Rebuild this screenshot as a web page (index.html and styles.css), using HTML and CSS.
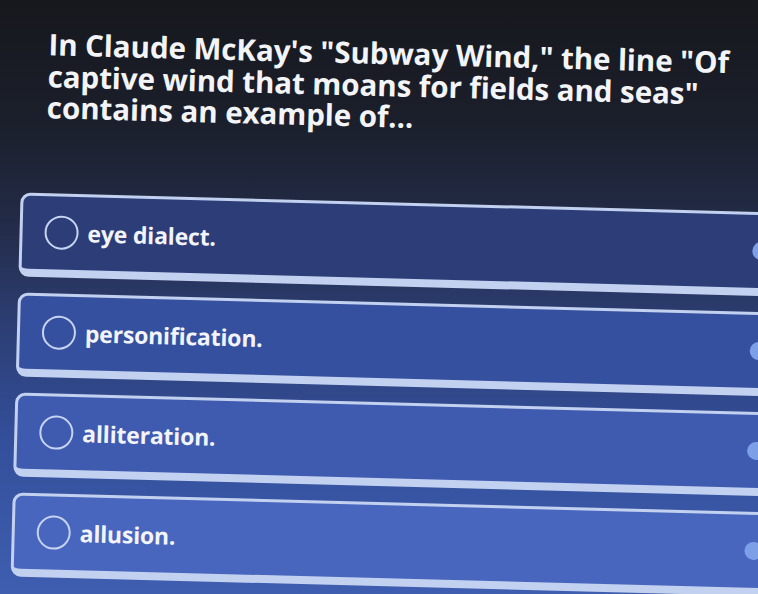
FILE: index.html
```html
<!DOCTYPE html>
<html lang="en">
<head>
<meta charset="utf-8">
<title>Question</title>
<link rel="stylesheet" href="styles.css">
</head>
<body>
<div class="screen">
  <h1 class="question">In Claude McKay's "Subway Wind," the line "Of<br>captive wind that moans for fields and seas"<br>contains an example of...</h1>
  <div class="options">
    <label class="option o1"><span class="radio"></span><span class="label">eye dialect.</span><span class="edge"></span></label>
    <label class="option o2"><span class="radio"></span><span class="label">personification.</span><span class="edge"></span></label>
    <label class="option o3"><span class="radio"></span><span class="label">alliteration.</span><span class="edge"></span></label>
    <label class="option o4"><span class="radio"></span><span class="label">allusion.</span><span class="edge"></span></label>
  </div>
</div>
</body>
</html>
```
FILE: styles.css
```css
html, body {
  margin: 0;
  padding: 0;
  height: 100%;
  overflow: hidden;
}
body {
  background: linear-gradient(180deg, #17181d 0%, #1b1f2b 20%, #232c48 38%, #2c3e74 55%, #34509c 75%, #3f5eb0 100%);
  font-family: "Open Sans", "Lato", sans-serif;
  color: #f2f4fa;
}
.screen {
  width: 758px;
  height: 594px;
  box-sizing: border-box;
  padding-top: 37px;
  transform: rotate(1.5deg);
  transform-origin: 379px 297px;
}
.question {
  margin: 0 0 0 42px;
  font-size: 29.6px;
  line-height: 31.5px;
  font-weight: 700;
  letter-spacing: -0.1px;
  color: #f3f4f8;
  white-space: nowrap;
}
.options {
  margin-top: 70px;
  display: flex;
  flex-direction: column;
  gap: 16px;
  margin-left: 18px;
  margin-right: -30px;
}
.option {
  display: flex;
  align-items: center;
  height: 84px;
  box-sizing: border-box;
  border: 3px solid #c3d1f0;
  border-bottom-width: 8px;
  border-radius: 10px;
  padding-left: 22px;
  padding-right: 16px;
}
.o1 { background: #2c3d78; }
.o2 { background: #3650a0; }
.o3 { background: #3e5bb0; }
.o4 { background: #4866bd; }
.radio {
  width: 30px;
  height: 30px;
  border: 2px solid #c6d3f1;
  border-radius: 50%;
  flex: none;
}
.label {
  margin-left: 9px;
  font-size: 23px;
  font-weight: 700;
  color: #f2f4fa;
  letter-spacing: -0.2px;
}
.edge {
  margin-left: auto;
  width: 18px;
  height: 18px;
  border-radius: 50%;
  background: #7d9fe8;
  flex: none;
}
```
